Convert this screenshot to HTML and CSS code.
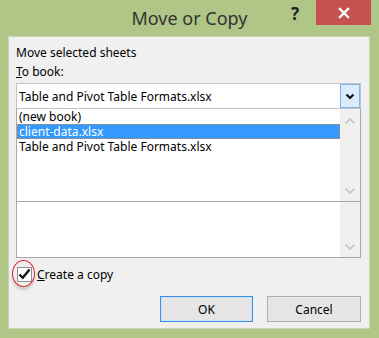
FILE: index.html
```html
<!DOCTYPE html>
<html lang="en">
<head>
    <meta charset="UTF-8">
    <meta name="viewport" content="width=device-width, initial-scale=1.0">
    <title>Move or Copy</title>
    <link rel="stylesheet" href="styles.css">
</head>
<body>
    <div class="dialog">
        <header class="titlebar">
            <span class="title">Move or Copy</span>
            <span class="help">?</span>
            <button class="close" aria-label="Close">
                <svg width="12" height="12" viewBox="0 0 12 12">
                    <path d="M2 2 L10 10 M10 2 L2 10" stroke="#fff" stroke-width="2.4" stroke-linecap="square"/>
                </svg>
            </button>
        </header>

        <main class="panel">
            <div class="label first">Move selected sheets</div>
            <div class="label"><u>T</u>o book:</div>

            <div class="combo">
                <span class="combo-text">Table and Pivot Table Formats.xlsx</span>
                <span class="combo-btn">
                    <svg width="10" height="7" viewBox="0 0 10 7">
                        <path d="M1.5 1.5 L5 5 L8.5 1.5" stroke="#111" stroke-width="2.2" fill="none"/>
                    </svg>
                </span>
            </div>

            <div class="listbox">
                <ul class="items">
                    <li>(new book)</li>
                    <li class="selected">client-data.xlsx</li>
                    <li>Table and Pivot Table Formats.xlsx</li>
                </ul>
                <div class="scroll">
                    <svg width="12" height="8" viewBox="0 0 12 8"><path d="M1.5 6.5 L6 2 L10.5 6.5" stroke="#c4c4c4" stroke-width="1.6" fill="none"/></svg>
                    <svg width="12" height="8" viewBox="0 0 12 8"><path d="M1.5 1.5 L6 6 L10.5 1.5" stroke="#c4c4c4" stroke-width="1.6" fill="none"/></svg>
                </div>
            </div>

            <div class="listbox sheets">
                <ul class="items"></ul>
                <div class="scroll bottom">
                    <svg width="12" height="8" viewBox="0 0 12 8"><path d="M1.5 1.5 L6 6 L10.5 1.5" stroke="#c4c4c4" stroke-width="1.6" fill="none"/></svg>
                </div>
            </div>

            <label class="check-row">
                <span class="checkbox">
                    <svg width="13" height="12" viewBox="0 0 13 12">
                        <path d="M1.5 6.5 L4.8 9.8 L11.5 1.5" stroke="#111" stroke-width="2.4" fill="none"/>
                    </svg>
                    <span class="circle"></span>
                </span>
                <span><u>C</u>reate a copy</span>
            </label>

            <div class="actions">
                <button class="btn default">OK</button>
                <button class="btn">Cancel</button>
            </div>
        </main>
    </div>
</body>
</html>
```

FILE: styles.css
```css
* {
    margin: 0;
    padding: 0;
    box-sizing: border-box;
}

body {
    background: #afc687;
    font-family: 'Noto Sans', 'Open Sans', sans-serif;
    font-size: 12px;
    color: #000;
}

.dialog {
    width: 379px;
    height: 338px;
    background: #afc687;
    display: flex;
    flex-direction: column;
}

.titlebar {
    height: 36px;
    display: flex;
    align-items: flex-start;
    position: relative;
}

.title {
    position: absolute;
    left: 0;
    right: 0;
    top: 6px;
    text-align: center;
    font-size: 18px;
    color: #333;
}

.help {
    position: absolute;
    left: 291px;
    top: 2px;
    font-size: 17px;
    font-weight: bold;
    color: #222;
}

.close {
    position: absolute;
    left: 316px;
    top: 0;
    width: 55px;
    height: 25px;
    background: #c75050;
    border: none;
    display: flex;
    align-items: center;
    justify-content: center;
}

.panel {
    margin: 0 9px 9px 8px;
    flex: 1;
    background: #f0f0f0;
    border: 1px solid #c8d3b4;
    padding: 0 8px 0 7px;
}

.label {
    height: 18px;
    line-height: 18px;
}

.label.first {
    margin-top: 7px;
    margin-bottom: 1px;
}

.combo {
    margin-top: 2px;
    height: 26px;
    border: 1px solid #c3c3c3;
    background: #fff;
    display: flex;
    align-items: center;
    padding-left: 2px;
}

.combo-text {
    flex: 1;
}

.combo-btn {
    width: 20px;
    height: 24px;
    background: #dcebfb;
    border: 1px solid #7eb4ea;
    display: flex;
    align-items: center;
    justify-content: center;
}

.listbox {
    height: 93px;
    border: 1px solid #a8a8a8;
    border-top: none;
    background: #fff;
    display: flex;
}

.listbox.sheets {
    height: 56px;
}

.items {
    flex: 1;
    list-style: none;
}

.items li {
    height: 15px;
    line-height: 15px;
    padding-left: 2px;
    overflow: hidden;
}

.items li.selected {
    background: #3399ff;
    color: #fff;
    border: 1px dotted #d28a3a;
    line-height: 13px;
    padding-left: 1px;
}

.scroll {
    width: 20px;
    background: #f0f0f0;
    display: flex;
    flex-direction: column;
    justify-content: space-between;
    align-items: center;
    padding: 8px 0 6px;
}

.scroll.bottom {
    justify-content: flex-end;
}

.check-row {
    margin-top: 8px;
    display: flex;
    align-items: center;
    gap: 5px;
    height: 16px;
}

.checkbox {
    width: 15px;
    height: 15px;
    border: 1px solid #8f8f8f;
    background: #fff;
    margin-left: 1px;
    display: flex;
    align-items: center;
    justify-content: center;
    position: relative;
}

.circle {
    position: absolute;
    left: -6px;
    top: -8px;
    width: 23px;
    height: 27px;
    border: 1.5px solid #e0282d;
    border-radius: 50%;
    box-shadow: 0 3px 3px rgba(0, 0, 0, 0.15);
}

.actions {
    margin-top: 14px;
    display: flex;
    justify-content: flex-end;
    gap: 14px;
}

.btn {
    width: 94px;
    height: 26px;
    font-family: inherit;
    font-size: 12px;
    color: #000;
    background: #e5e5e5;
    border: 1px solid #acacac;
}

.btn.default {
    width: 93px;
    border: 1px solid #3c8fe0;
    box-shadow: inset 0 0 0 1px #cde3f8;
}
```
